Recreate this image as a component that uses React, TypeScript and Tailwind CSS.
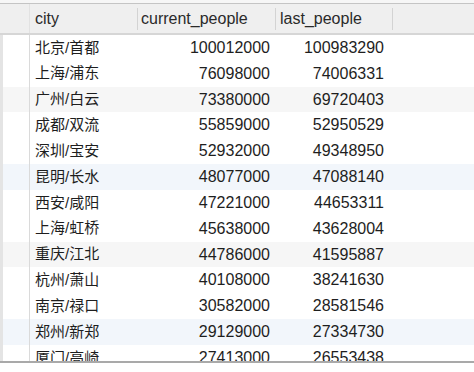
const rows = [
  { city: "北京/首都", current: "100012000", last: "100983290" },
  { city: "上海/浦东", current: "76098000", last: "74006331" },
  { city: "广州/白云", current: "73380000", last: "69720403" },
  { city: "成都/双流", current: "55859000", last: "52950529" },
  { city: "深圳/宝安", current: "52932000", last: "49348950" },
  { city: "昆明/长水", current: "48077000", last: "47088140" },
  { city: "西安/咸阳", current: "47221000", last: "44653311" },
  { city: "上海/虹桥", current: "45638000", last: "43628004" },
  { city: "重庆/江北", current: "44786000", last: "41595887" },
  { city: "杭州/萧山", current: "40108000", last: "38241630" },
  { city: "南京/禄口", current: "30582000", last: "28581546" },
  { city: "郑州/新郑", current: "29129000", last: "27334730" },
  { city: "厦门/高崎", current: "27413000", last: "26553438" },
];

// every third row gets a faint stripe, alternating grey and blue
function stripe(i: number) {
  if (i % 3 !== 2) return "bg-white";
  return i % 6 === 2 ? "bg-[#f6f6f6]" : "bg-[#f2f6fb]";
}

export default function App() {
  return (
    <div
      className="w-[474px] h-[372px] bg-white overflow-hidden text-[#1e1e1e]"
      style={{ fontFamily: '"Liberation Sans", "Noto Sans CJK SC", sans-serif' }}
    >
      <div className="h-[3px] bg-[#f6f6f6]" />
      <div className="h-[360px] overflow-hidden border-t border-[#c4c4c4] border-b-2 border-b-[#a9a9a9]">
        {/* header */}
        <div className="flex h-[31px] items-center bg-[#efefef] border-b-2 border-[#d6d6d6] text-[16px] text-[#2a2a2a]">
          <div className="w-[30px] h-full border-r border-[#e2e2e2]" />
          <div className="w-[107px] h-full flex items-center pl-[5px]">city</div>
          <div className="w-[1px] h-[22px] bg-[#d3d3d3]" />
          <div className="w-[137px] h-full flex items-center pl-[3px]">current_people</div>
          <div className="w-[1px] h-[22px] bg-[#d3d3d3]" />
          <div className="w-[116px] h-full flex items-center pl-[4px]">last_people</div>
          <div className="w-[1px] h-[22px] bg-[#d3d3d3]" />
          <div className="flex-1" />
        </div>
        {/* body */}
        {rows.map((r, i) => (
          <div key={r.city} className={`flex h-[25.83px] items-center ${stripe(i)}`}>
            <div className="w-[30px] h-full border-l-[3px] border-l-[#e4e4e4] border-r border-r-[#dadada]" />
            <div className="w-[107px] pl-[5px] text-[15px]">{r.city}</div>
            <div className="w-[138px] pr-[5px] text-right text-[16px]">{r.current}</div>
            <div className="w-[117px] pr-[8px] text-right text-[16px]">{r.last}</div>
            <div className="flex-1" />
          </div>
        ))}
      </div>
      <div className="flex-1" />
    </div>
  );
}
